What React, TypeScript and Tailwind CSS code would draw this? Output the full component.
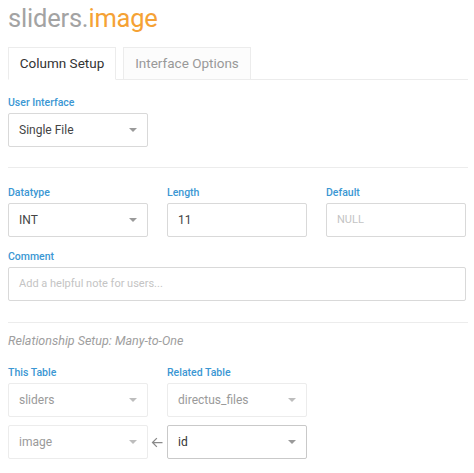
import React from "react";

const font = { fontFamily: "Roboto, 'Noto Sans', sans-serif" };

function Label({ children }: { children: React.ReactNode }) {
  return (
    <div className="mb-[3px] h-[16px] pt-[2px] text-[10.5px] font-medium leading-[14px] text-[#3b97d3]">
      {children}
    </div>
  );
}

function Caret({ light }: { light?: boolean }) {
  return (
    <span
      className={`h-0 w-0 border-x-[4px] border-t-[4px] border-x-transparent ${
        light ? "border-t-[#bdbdbd]" : "border-t-[#9a9a9a]"
      }`}
    />
  );
}

function Select({
  value,
  muted,
  strong,
}: {
  value: string;
  muted?: boolean;
  strong?: boolean;
}) {
  return (
    <div
      className={`flex h-[34px] w-[140px] items-center justify-between rounded-[2px] border bg-white pl-[10px] pr-[10px] text-[12px] ${
        strong
          ? "border-[#c9c9c9] text-[#333]"
          : muted
            ? "border-[#ececec] text-[#9a9a9a]"
            : "border-[#d9d9d9] text-[#444]"
      }`}
    >
      <span>{value}</span>
      <Caret light={muted} />
    </div>
  );
}

function Input({
  value,
  placeholder,
  wide,
}: {
  value?: string;
  placeholder?: string;
  wide?: boolean;
}) {
  return (
    <div
      className={`flex h-[34px] items-center rounded-[2px] border border-[#d9d9d9] bg-white px-[10px] ${
        wide ? "w-[458px]" : "w-[140px]"
      } ${value ? "text-[12px] text-[#444]" : "text-[11px] text-[#c4c4c4]"}`}
    >
      {value ?? placeholder}
    </div>
  );
}

export default function App() {
  return (
    <div className="h-[473px] w-[474px] overflow-hidden bg-white" style={font}>
      <div className="px-[8px] pt-[1px]">
        <h1 className="h-[36px] text-[25.5px] font-normal leading-[34px] tracking-[-0.2px]">
          <span className="text-[#a3a3a3]">sliders.</span>
          <span className="text-[#f5a235]">image</span>
        </h1>

        {/* Tabs */}
        <div className="mt-[10px] flex w-[460px] border-b border-[#ececec]">
          <div className="-mb-px flex h-[33px] w-[108px] items-center justify-center border border-b-white border-[#ececec] bg-white text-[13.5px] text-[#333]">
            Column Setup
          </div>
          <div className="-mb-px ml-[7px] flex h-[33px] w-[128px] items-center justify-center border border-[#ececec] bg-[#fcfcfc] text-[13.5px] text-[#999]">
            Interface Options
          </div>
        </div>

        <div className="mt-[14px]">
          <Label>User Interface</Label>
          <Select value="Single File" />
        </div>

        <div className="mt-[20px] w-[460px] border-t border-[#ececec]" />

        <div className="mt-[16px] flex gap-[19px]">
          <div>
            <Label>Datatype</Label>
            <Select value="INT" />
          </div>
          <div>
            <Label>Length</Label>
            <Input value="11" />
          </div>
          <div>
            <Label>Default</Label>
            <Input placeholder="NULL" />
          </div>
        </div>

        <div className="mt-[11px]">
          <Label>Comment</Label>
          <Input wide placeholder="Add a helpful note for users..." />
        </div>

        <div className="mt-[21px] w-[460px] border-t border-[#ececec]" />

        <div className="mt-[9px] text-[12.5px] italic leading-[18px] text-[#9e9e9e]">
          Relationship Setup: Many-to-One
        </div>

        <div className="mt-[14px] flex gap-[19px]">
          <div>
            <Label>This Table</Label>
            <Select value="sliders" muted />
          </div>
          <div>
            <Label>Related Table</Label>
            <Select value="directus_files" muted />
          </div>
        </div>

        <div className="mt-[8px] flex items-center">
          <Select value="image" muted />
          <div className="flex w-[19px] items-center justify-center">
            <svg width="15" height="15" viewBox="0 0 24 24" fill="none" stroke="#8a8a8a" strokeWidth="2">
              <path d="M20 12H4M11 5l-7 7 7 7" />
            </svg>
          </div>
          <Select value="id" strong />
        </div>
      </div>
    </div>
  );
}
